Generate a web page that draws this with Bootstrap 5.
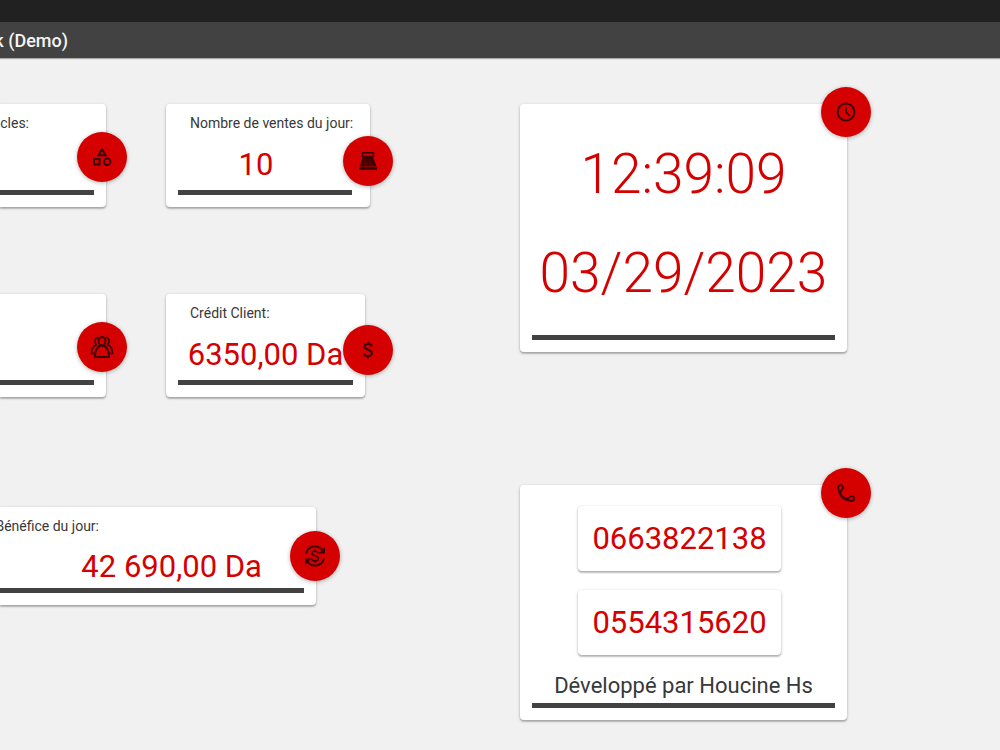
<!DOCTYPE html>
<html lang="fr">
<head>
<meta charset="utf-8">
<meta name="viewport" content="width=device-width, initial-scale=1">
<title>Demo</title>
<link href="https://cdn.jsdelivr.net/npm/bootstrap@5.3.0/dist/css/bootstrap.min.css" rel="stylesheet">
<style>
body { background: #f1f1f1; color: #383838; font-family: Roboto, sans-serif; overflow-x: hidden; }
.top-strip { height: 22px; background: #212121; }
.app-bar { height: 36px; background: #424242; box-shadow: 0 1px 1px rgba(0,0,0,.3); }
.app-title { width: 68px; font-size: 18px; font-weight: 500; line-height: 37px; color: #f5f5f5; }
.board { display: grid; grid-template-columns: minmax(0,520fr) minmax(0,327fr) minmax(0,153fr); padding: 46px 0 28px; }
.stat-grid { display: grid; grid-template-columns: minmax(0,106fr) minmax(0,60fr) minmax(0,204fr) minmax(0,150fr); row-gap: 87px; }
.in-first { grid-column: 1; }
.in-second { grid-column: 3; }
.panel { position: relative; display: flex; flex-direction: column; background: #fff; border-radius: 4px; padding: 8px 12px 12px; box-shadow: 0 1px 3px rgba(0,0,0,.3), 0 2px 1px rgba(0,0,0,.12); }
.from-edge { border-radius: 0 4px 4px 0; padding-left: 0; }
.stat { min-height: 103px; }
.credit { margin-right: 5px; }
.profit { min-height: 98px; margin-top: 110px; width: 316px; max-width: 61%; }
.caption-text { font-size: 14px; line-height: 22px; white-space: nowrap; }
.indent { padding-left: 12px; }
.clipped { display: flex; justify-content: flex-end; }
.clip-short { width: 29px; }
.clip-long { width: 99px; }
.red-value { color: #d50000; font-size: 31px; line-height: 40px; text-align: center; white-space: nowrap; }
.stat .red-value { margin-top: 11px; }
.count { padding-right: 24px; }
.profit .red-value { margin-top: 10px; text-align: right; padding-right: 42px; }
.rule { height: 5px; background: #424242; margin-top: auto; }
.rule-short { margin-right: 6px; }
.side { display: flex; flex-direction: column; gap: 133px; }
.clock-panel { padding-top: 21px; min-height: 248px; }
.clock-line { color: #d50000; font-size: 55px; font-weight: 300; line-height: 99px; text-align: center; white-space: nowrap; }
.contact { padding-top: 21px; min-height: 235px; }
.phones { display: flex; flex-direction: column; gap: 19px; width: 203px; margin: 0 auto; transform: none; }
.contact .phones { margin-right: 54px; }
.phone-link { line-height: 65px; border-radius: 4px; text-decoration: none; box-shadow: 0 1px 3px rgba(0,0,0,.3), 0 2px 1px rgba(0,0,0,.12); }
.author { margin-top: 15px; font-size: 22px; line-height: 32px; text-align: center; white-space: nowrap; }
.fab { position: absolute; width: 50px; height: 50px; padding: 0; border: 0; border-radius: 50%; background: #d50000; color: #3c0000; display: flex; align-items: center; justify-content: center; box-shadow: 0 1px 4px rgba(0,0,0,.3); }
.fab svg { fill: none; stroke: currentColor; stroke-width: 2; }
.fab-a { top: 28px; right: -21px; }
.fab-b { top: 32px; right: -23px; }
.fab-c { top: 31px; right: -28px; }
.fab-d { top: 24px; right: -24px; }
.fab-corner { top: -17px; right: -24px; }
</style>
</head>
<body>
<header>
  <div class="top-strip"></div>
  <nav class="app-bar"><div class="app-title clipped text-nowrap">k (Demo)</div></nav>
</header>
<main class="board">
  <section>
    <div class="stat-grid">
      <div class="panel stat from-edge in-first">
        <div class="caption-text clipped clip-short">cles:</div>
        <div class="rule"></div>
        <button type="button" class="fab fab-a" aria-label="cles">
          <svg width="20" height="20" viewBox="0 0 20 20"><path d="M10 2.200 13.600 8.200H6.400Z"/><path d="M2 12h5.600v5.600H2z"/><circle cx="15.200" cy="14.800" r="3.200"/></svg>
        </button>
      </div>
      <div class="panel stat in-second">
        <div class="caption-text indent">Nombre de ventes du jour:</div>
        <div class="red-value count">10</div>
        <div class="rule rule-short"></div>
        <button type="button" class="fab fab-b" aria-label="ventes">
          <svg width="20" height="20" viewBox="0 0 20 20"><path d="M4.500 1.800h11V5.600h-11z" stroke-width="1.600" stroke-linejoin="round"/><path d="M5 6h10l3.500 9.400h-17z" fill="currentColor" stroke="none"/><path d="M1 16h18v3H1z" fill="currentColor" stroke="none"/><path d="M6.500 9h7M6 11.200h8M5.500 13.400h9" stroke="#780000" stroke-width="1" stroke-dasharray="1.500 1.200"/></svg>
        </button>
      </div>
      <div class="panel stat from-edge in-first">
        <div class="rule"></div>
        <button type="button" class="fab fab-a" aria-label="clients">
          <svg width="24" height="24" viewBox="0 0 24 24" stroke-linejoin="round"><ellipse cx="12" cy="6.200" rx="3.500" ry="4.200"/><path d="M5 22c0-6 2-9.500 4.500-11.200h5C17 12.500 19 16 19 22z"/><path d="M9 3C6.500 2 4.800 4 5 6.500c.1 1.500.6 2.500 1.200 3.300C3 11.500 1.500 14 1.500 18.500H5M15 3c2.500-1 4.200 1 4 3.500-.1 1.500-.6 2.500-1.200 3.300 3.200 1.700 4.700 4.200 4.700 8.700H19" stroke-width="1.700"/></svg>
        </button>
      </div>
      <div class="panel stat in-second credit">
        <div class="caption-text indent">Crédit Client:</div>
        <div class="red-value">6350,00 Da</div>
        <div class="rule"></div>
        <button type="button" class="fab fab-c" aria-label="crédit">
          <svg width="20" height="20" viewBox="0 0 20 20"><path d="M13.800 6.500C13.300 3.200 6.500 3.200 6.500 6.800c0 3.500 7.400 2.500 7.400 6.300 0 4-7.500 4-7.900.2M10 1.800v2.500M10 15.700v2.500"/></svg>
        </button>
      </div>
    </div>
    <div class="panel profit from-edge">
      <div class="caption-text clipped clip-long">Bénéfice du jour:</div>
      <div class="red-value">42 690,00 Da</div>
      <div class="rule"></div>
      <button type="button" class="fab fab-d" aria-label="bénéfice">
        <svg width="24" height="24" viewBox="0 0 24 24"><path d="M3 9.500A9.300 9.300 0 0 1 20 7M21 14.500A9.300 9.300 0 0 1 4 17"/><path d="M22 3v6.500h-6.500zM2 21v-6.500h6.500z" fill="currentColor" stroke="none"/><path d="M15.200 9.300c-.5-2.700-6.200-2.700-6.200.2 0 2.800 6.400 1.900 6.400 5 0 3.200-6.500 3.200-6.800.1M12 5.200v2M12 16.800v2" stroke-width="1.600"/></svg>
      </button>
    </div>
  </section>
  <section class="side">
    <div class="panel clock-panel">
      <div class="clock-line">12:39:09</div>
      <div class="clock-line">03/29/2023</div>
      <div class="rule"></div>
      <button type="button" class="fab fab-corner" aria-label="heure">
        <svg width="20" height="20" viewBox="0 0 20 20"><circle cx="10" cy="10" r="8.400"/><path d="M10 5v5.200l3.700 3.700" stroke-width="1.700"/></svg>
      </button>
    </div>
    <div class="panel contact">
      <div class="phones">
        <a class="phone-link red-value" href="tel:0663822138">0663822138</a>
        <a class="phone-link red-value" href="tel:0554315620">0554315620</a>
      </div>
      <div class="author">Développé par Houcine Hs</div>
      <div class="rule"></div>
      <button type="button" class="fab fab-corner" aria-label="téléphone">
        <svg width="20" height="20" viewBox="0 0 20 20"><path d="M3 7.600C4.200 12.500 8 16.200 13 17.300" stroke-width="2.400"/><path d="M3 7.600C1.200 4.200 2.400 2 4.600 2S7.800 5 6 6.500C4.800 7.600 4.200 8.600 5 10M13 17.300c3.300 1.400 5.400.2 5.400-1.800s-3-3.300-4.600-1.500c-1 1.200-2 1.800-3.300 1" stroke-width="1.800"/></svg>
      </button>
    </div>
  </section>
</main>
<script src="https://cdn.jsdelivr.net/npm/bootstrap@5.3.0/dist/js/bootstrap.bundle.min.js"></script>
</body>
</html>
